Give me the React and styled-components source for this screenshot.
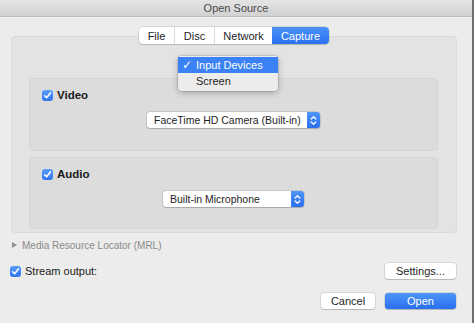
import React from 'react'
import styled, {createGlobalStyle} from 'styled-components'

const GlobalStyle = createGlobalStyle`
  html, body {
    margin: 0;
    padding: 0;
    background: #6f6f6f;
    font-family: "Liberation Sans", Arial, sans-serif;
  }
`

const Window = styled.div`
  position: relative;
  width: 472px;
  height: 323px;
  background: #ececec;
  display: flex;
  flex-direction: column;
  overflow: hidden;
`

const TitleBar = styled.div`
  height: 17px;
  flex: none;
  display: flex;
  align-items: center;
  justify-content: center;
  background: linear-gradient(#e4e4e4, #d2d2d2);
  border-bottom: 1px solid #bdbdbd;
  box-sizing: border-box;
  font-size: 11px;
  color: #4a4a4a;
`

const Content = styled.div`
  display: flex;
  flex-direction: column;
  padding: 10px 15px 0 11px;
`

const TabRow = styled.div`
  position: relative;
  z-index: 1;
  display: flex;
  justify-content: center;
`

const Segmented = styled.div`
  display: flex;
  height: 17px;
  border-radius: 4px;
  background: #fff;
  box-shadow: 0 0 0 0.5px rgba(0, 0, 0, 0.18), 0 1px 1px rgba(0, 0, 0, 0.12);
  overflow: hidden;
`

const Tab = styled.div`
  width: ${({w}) => w}px;
  display: flex;
  align-items: center;
  justify-content: center;
  font-size: 11px;
  color: ${({active}) => (active ? '#fff' : '#1e1e1e')};
  background: ${({active}) => (active ? 'linear-gradient(#4a92fa, #2a72f0)' : 'transparent')};
  border-left: ${({first, active}) => (first || active ? 'none' : '1px solid #dcdcdc')};
  box-sizing: border-box;
`

const Panel = styled.div`
  margin-top: -8px;
  height: 197px;
  box-sizing: border-box;
  background: #e3e3e3;
  border: 1px solid #dadada;
  border-radius: 4px;
  padding: 41px 18px 0 17px;
  display: flex;
  flex-direction: column;
  gap: 6px;
`

const Group = styled.div`
  height: ${({h}) => h}px;
  box-sizing: border-box;
  background: #dcdcdc;
  border: 1px solid #d5d5d5;
  border-radius: 4px;
  padding: 10px 12px 0 12px;
  display: flex;
  flex-direction: column;
`

const CheckRow = styled.label`
  display: flex;
  align-items: center;
  gap: 4px;
  font-size: ${({bold}) => (bold ? '11.5px' : '11px')};
  font-weight: ${({bold}) => (bold ? 'bold' : 'normal')};
  color: #1a1a1a;
  white-space: nowrap;
`

const Box = styled.span`
  width: 11px;
  height: 11px;
  flex: none;
  border-radius: 3px;
  background: linear-gradient(#5a9cf8, #2f74ee);
  display: flex;
  align-items: center;
  justify-content: center;
`

const SelectWrap = styled.div`
  display: flex;
  justify-content: center;
  margin-top: ${({mt}) => mt}px;
`

const Select = styled.div`
  width: ${({w}) => w}px;
  height: 16px;
  display: flex;
  background: #fff;
  border-radius: 3px;
  box-shadow: 0 0 0 0.5px rgba(0, 0, 0, 0.2), 0 1px 1px rgba(0, 0, 0, 0.15);
  overflow: hidden;
  font-size: 10.5px;
  color: #1e1e1e;
  white-space: nowrap;
`

const SelectText = styled.div`
  flex: 1;
  display: flex;
  align-items: center;
  padding-left: 7px;
`

const Stepper = styled.div`
  width: 13px;
  flex: none;
  background: linear-gradient(#4f95f9, #2b70ef);
  display: flex;
  align-items: center;
  justify-content: center;
`

const Menu = styled.div`
  position: absolute;
  left: 178px;
  top: 56px;
  width: 100px;
  z-index: 2;
  padding: 1px 0 2px;
  background: rgba(236, 236, 236, 0.97);
  border-radius: 4px;
  box-shadow: 0 0 0 0.5px rgba(0, 0, 0, 0.2), 0 2px 6px rgba(0, 0, 0, 0.25);
`

const MenuItem = styled.div`
  height: 16px;
  display: flex;
  align-items: center;
  font-size: 11px;
  color: ${({active}) => (active ? '#fff' : '#1e1e1e')};
  background: ${({active}) => (active ? '#3a82f6' : 'transparent')};
  padding-left: 4px;
`

const Tick = styled.span`
  width: 14px;
  font-size: 12px;
  font-family: "DejaVu Sans", sans-serif;
`

const Disclosure = styled.div`
  display: flex;
  align-items: center;
  gap: 5px;
  height: 14px;
  margin-top: 5px;
  padding-left: 1px;
  font-size: 10px;
  color: #8a8a8a;
`

const Triangle = styled.span`
  width: 0;
  height: 0;
  border-top: 3px solid transparent;
  border-bottom: 3px solid transparent;
  border-left: 5px solid #8f8f8f;
`

const Row = styled.div`
  display: flex;
  align-items: center;
  justify-content: ${({end}) => (end ? 'flex-end' : 'space-between')};
  gap: 10px;
  margin-top: ${({mt}) => mt}px;
  padding-right: 1px;
`

const Button = styled.div`
  width: ${({w}) => w}px;
  height: 16px;
  display: flex;
  align-items: center;
  justify-content: center;
  border-radius: 3px;
  font-size: 11px;
  color: ${({primary}) => (primary ? '#fff' : '#1e1e1e')};
  background: ${({primary}) => (primary ? 'linear-gradient(#4f95f9, #2a6fee)' : '#fff')};
  box-shadow: 0 0 0 0.5px rgba(0, 0, 0, 0.18), 0 1px 1px rgba(0, 0, 0, 0.15);
`

const Check = () => (
  <svg width="9" height="9" viewBox="0 0 9 9">
    <path d="M1.6 4.8 L3.6 6.8 L7.4 1.9" fill="none" stroke="#fff" strokeWidth="1.6" strokeLinecap="round" strokeLinejoin="round" />
  </svg>
)

const Arrows = () => (
  <svg width="7" height="11" viewBox="0 0 7 11">
    <path d="M1.2 4 L3.5 1.8 L5.8 4 M1.2 7 L3.5 9.2 L5.8 7" fill="none" stroke="#fff" strokeWidth="1.2" strokeLinecap="round" strokeLinejoin="round" />
  </svg>
)

const tabs = [
  {label: 'File', w: 35},
  {label: 'Disc', w: 40},
  {label: 'Network', w: 58},
  {label: 'Capture', w: 57, active: true},
]

export default function App() {
  return (
    <Window>
      <GlobalStyle />
      <TitleBar>Open Source</TitleBar>
      <Content>
        <TabRow>
          <Segmented>
            {tabs.map((t, i) => (
              <Tab key={t.label} w={t.w} active={t.active} first={i === 0}>
                {t.label}
              </Tab>
            ))}
          </Segmented>
        </TabRow>
        <Panel>
          <Group h={73}>
            <CheckRow bold>
              <Box><Check /></Box>
              Video
            </CheckRow>
            <SelectWrap mt={11}>
              <Select w={173}>
                <SelectText>FaceTime HD Camera (Built-in)</SelectText>
                <Stepper><Arrows /></Stepper>
              </Select>
            </SelectWrap>
          </Group>
          <Group h={72}>
            <CheckRow bold>
              <Box><Check /></Box>
              Audio
            </CheckRow>
            <SelectWrap mt={11}>
              <Select w={141}>
                <SelectText>Built-in Microphone</SelectText>
                <Stepper><Arrows /></Stepper>
              </Select>
            </SelectWrap>
          </Group>
        </Panel>
        <Disclosure>
          <Triangle />
          Media Resource Locator (MRL)
        </Disclosure>
        <Row mt={11}>
          <CheckRow>
            <Box style={{marginLeft: -1}}><Check /></Box>
            Stream output:
          </CheckRow>
          <Button w={71}>Settings...</Button>
        </Row>
        <Row end mt={14}>
          <Button w={54}>Cancel</Button>
          <Button w={71} primary>Open</Button>
        </Row>
      </Content>
      <Menu>
        <MenuItem active><Tick>✓</Tick>Input Devices</MenuItem>
        <MenuItem><Tick />Screen</MenuItem>
      </Menu>
    </Window>
  )
}
